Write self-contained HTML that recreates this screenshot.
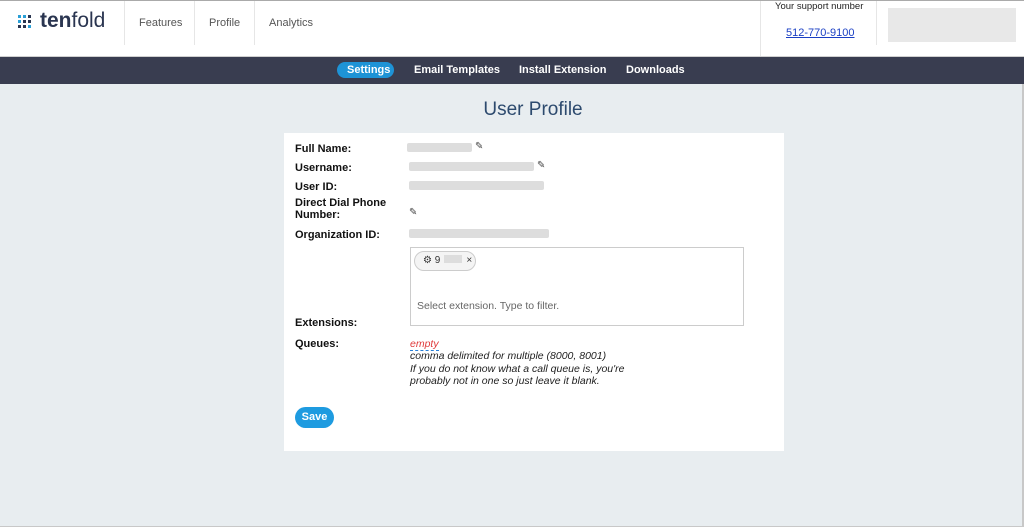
<!DOCTYPE html>
<html><head><style>
*{margin:0;padding:0;box-sizing:border-box}
body{width:1024px;height:527px;overflow:hidden;background:#e8edf0;font-family:"Liberation Sans",sans-serif;position:relative;border-right:2px solid #c8c8c8;border-bottom:1px solid #c8c8c8}
.a{position:absolute}
.hdr{left:0;top:0;width:1024px;height:57px;background:#fff;border-top:1px solid #aaa;border-bottom:1px solid #d0d0d0}
.nav{left:0;top:57px;width:1024px;height:27px;background:#393d50}
.nl{color:#fff;font-size:11px;font-weight:bold;top:64px;line-height:13px}
.sep{top:1px;width:1px;height:44px;background:#e6e6e6}
.lbl{left:295px;font-size:11px;font-weight:bold;color:#111}
.blur{background:#ddd;height:9px;border-radius:2px}
.pen{font-size:10px;color:#444}
</style></head><body>
<div class="a hdr"></div>
<div class="a" style="left:18px;top:14px;width:16px;height:16px">
<svg width="16" height="16"><g fill="#2a9fd6"><rect x="0" y="1" width="3" height="3"/><rect x="5" y="1" width="3" height="3"/><rect x="10" y="11" width="3" height="3"/><rect x="0" y="6" width="3" height="3"/></g><g fill="#2a3550"><rect x="10" y="1" width="3" height="3"/><rect x="5" y="6" width="3" height="3"/><rect x="10" y="6" width="3" height="3"/><rect x="0" y="11" width="3" height="3"/><rect x="5" y="11" width="3" height="3"/></g></svg></div>
<div class="a" style="left:40px;top:9px;font-size:21px;color:#2a3550"><b>ten</b>fold</div>
<div class="a sep" style="left:124px"></div>
<div class="a sep" style="left:194px"></div>
<div class="a sep" style="left:254px"></div>
<div class="a" style="left:139px;top:17px;font-size:11px;color:#555">Features</div>
<div class="a" style="left:209px;top:17px;font-size:11px;color:#555">Profile</div>
<div class="a" style="left:269px;top:17px;font-size:11px;color:#555">Analytics</div>
<div class="a sep" style="left:760px;height:55px"></div>
<div class="a sep" style="left:876px;height:44px"></div>
<div class="a" style="left:775px;top:1px;font-size:9.5px;color:#222">Your support number</div>
<div class="a" style="left:786px;top:27px;font-size:11px;color:#1a3fc4;text-decoration:underline">512-770-9100</div>
<div class="a" style="left:888px;top:8px;width:128px;height:34px;background:#e8e8e8"></div>
<div class="a nav"></div>
<div class="a" style="left:337px;top:62px;width:57px;height:16px;background:#1e93d6;border-radius:8px"></div>
<div class="a nl" style="left:347px;top:64px">Settings</div>
<div class="a nl" style="left:414px">Email Templates</div>
<div class="a nl" style="left:519px">Install Extension</div>
<div class="a nl" style="left:626px">Downloads</div>
<div class="a" style="left:0;width:1024px;top:99px;text-align:center;font-size:19px;color:#2d4a6e;padding-left:42px">User Profile</div>
<div class="a" style="left:284px;top:133px;width:500px;height:318px;background:#fff"></div>
<div class="a lbl" style="top:143px">Full Name:</div>
<div class="a lbl" style="top:162px">Username:</div>
<div class="a lbl" style="top:181px">User ID:</div>
<div class="a lbl" style="top:197px;line-height:12px">Direct Dial Phone<br>Number:</div>
<div class="a lbl" style="top:229px">Organization ID:</div>
<div class="a lbl" style="top:317px">Extensions:</div>
<div class="a lbl" style="top:338px">Queues:</div>
<div class="a blur" style="left:407px;top:143px;width:65px"></div><div class="a pen" style="left:475px;top:141px">✎</div>
<div class="a blur" style="left:409px;top:162px;width:125px"></div><div class="a pen" style="left:537px;top:160px">✎</div>
<div class="a blur" style="left:409px;top:181px;width:135px"></div>
<div class="a pen" style="left:409px;top:207px">✎</div>
<div class="a blur" style="left:409px;top:229px;width:140px"></div>
<div class="a" style="left:410px;top:247px;width:334px;height:79px;border:1px solid #ccc"></div>
<div class="a" style="left:414px;top:251px;width:62px;height:20px;border:1px solid #ccc;border-radius:10px;background:#f4f4f4;font-size:10px;color:#333;padding:3px 0 0 8px">⚙ 9<span style="display:inline-block;width:18px;height:8px;background:#ddd;margin:0 4px"></span>×</div>
<div class="a" style="left:417px;top:300px;font-size:10.5px;color:#666">Select extension. Type to filter.</div>
<div class="a" style="left:410px;top:338px;font-size:10.5px;font-style:italic;color:#e03a3a;border-bottom:1px dashed #2a7fd6;line-height:12px">empty</div>
<div class="a" style="left:410px;top:350px;font-size:10.5px;font-style:italic;color:#222;line-height:12.5px">comma delimited for multiple (8000, 8001)<br>If you do not know what a call queue is, you're<br>probably not in one so just leave it blank.</div>
<div class="a" style="left:295px;top:407px;width:39px;height:21px;background:#1e9be0;border-radius:11px"></div>
<div class="a" style="left:295px;top:411px;width:39px;color:#fff;font-size:11px;font-weight:bold;text-align:center;line-height:13px">Save</div>
</body></html>
